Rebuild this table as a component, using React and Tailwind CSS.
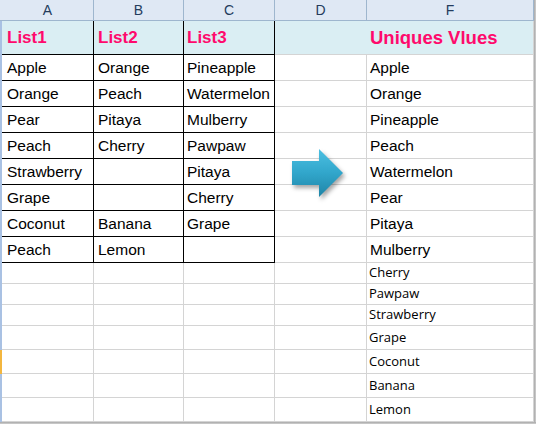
import React from "react";

const A = ["Apple", "Orange", "Pear", "Peach", "Strawberry", "Grape", "Coconut", "Peach"];
const B = ["Orange", "Peach", "Pitaya", "Cherry", "", "", "Banana", "Lemon"];
const C = ["Pineapple", "Watermelon", "Mulberry", "Pawpaw", "Pitaya", "Cherry", "Grape", ""];
const F = ["Apple", "Orange", "Pineapple", "Peach", "Watermelon", "Pear", "Pitaya", "Mulberry"];
const F2 = [
  ["Cherry", "h-[21px]"],
  ["Pawpaw", "h-[21px]"],
  ["Strawberry", "h-[21px]"],
  ["Grape", "h-[24px]"],
  ["Coconut", "h-[24px]"],
  ["Banana", "h-[24px]"],
  ["Lemon", "h-[24px]"],
];

const arial = { fontFamily: '"Liberation Sans", Arial, sans-serif' };
const calibri = { fontFamily: '"Open Sans", "Noto Sans", sans-serif' };

function Strip({ orange }) {
  return <div className={`w-[2px] shrink-0 ${orange ? "bg-[#f3b63f]" : "bg-[#a9c1e3]"}`} />;
}

function Arrow() {
  return (
    <svg
      className="absolute left-[290px] top-[147px] drop-shadow-[2px_3px_2px_rgba(0,0,0,0.35)]"
      width="58"
      height="54"
      viewBox="0 0 58 54"
    >
      <defs>
        <linearGradient id="ag" x1="0" y1="0" x2="0" y2="1">
          <stop offset="0" stopColor="#4cc0e2" />
          <stop offset="0.5" stopColor="#31a6cb" />
          <stop offset="1" stopColor="#1f84a6" />
        </linearGradient>
      </defs>
      <path d="M2 14 H29 V2 L53 26 L29 50 V38 H2 Z" fill="url(#ag)" />
    </svg>
  );
}

export default function App() {
  return (
    <div className="w-[536px] h-[424px] bg-white overflow-hidden flex flex-col" style={arial}>
      <div className="flex">
        <div className="relative w-[534px] flex flex-col">
          {/* column header row */}
          <div className="flex h-[21px] bg-[#dfe8f4] border-b border-[#9eb6ce] text-[14px] text-[#243c5c]">
            <div className="w-[2px] shrink-0 bg-[#dfe8f4]" />
            {[
              ["A", "w-[92px]"],
              ["B", "w-[90px]"],
              ["C", "w-[91px]"],
              ["D", "w-[92px]"],
              ["F", "w-[167px]"],
            ].map(([l, w]) => (
              <div key={l} className={`${w} shrink-0 border-r border-[#9eb6ce] flex items-center justify-center`}>
                {l}
              </div>
            ))}
          </div>
          {/* list header row */}
          <div className="flex h-[34px] font-bold text-[#ff0a6c]">
            <Strip />
            <div className="w-[92px] shrink-0 bg-[#daeef3] border-r border-b border-black flex items-center pl-[5px] text-[17px]">List1</div>
            <div className="w-[90px] shrink-0 bg-[#daeef3] border-r border-b border-black flex items-center pl-[4px] text-[17px]">List2</div>
            <div className="w-[91px] shrink-0 bg-[#daeef3] border-r border-b border-black flex items-center pl-[3px] text-[17px]">List3</div>
            <div className="w-[92px] shrink-0 bg-[#daeef3] border-b border-[#d4d4d4]" />
            <div className="w-[167px] shrink-0 bg-[#daeef3] border-r border-b border-[#d4d4d4] flex items-center pl-[3px] text-[18.5px]">Uniques Vlues</div>
          </div>
          {/* data rows */}
          {A.map((a, i) => (
            <div key={i} className="flex h-[26px] text-[15.5px] text-black">
              <Strip />
              <div className="w-[92px] shrink-0 border-r border-b border-black flex items-center pl-[5px] whitespace-nowrap">{a}</div>
              <div className="w-[90px] shrink-0 border-r border-b border-black flex items-center pl-[4px] whitespace-nowrap">{B[i]}</div>
              <div className="w-[91px] shrink-0 border-r border-b border-black flex items-center pl-[3px] whitespace-nowrap overflow-hidden">{C[i]}</div>
              <div className="w-[92px] shrink-0 border-r border-b border-[#d4d4d4]" />
              <div className="w-[167px] shrink-0 border-r border-b border-[#d4d4d4] flex items-center pl-[3px] whitespace-nowrap">{F[i]}</div>
            </div>
          ))}
          {F2.map(([t, h], i) => (
            <div key={t} className={`flex ${h} text-[13px] text-black`}>
              <Strip orange={i === 4} />
              <div className="w-[92px] shrink-0 border-r border-b border-[#d4d4d4]" />
              <div className="w-[90px] shrink-0 border-r border-b border-[#d4d4d4]" />
              <div className="w-[91px] shrink-0 border-r border-b border-[#d4d4d4]" />
              <div className="w-[92px] shrink-0 border-r border-b border-[#d4d4d4]" />
              <div className="w-[167px] shrink-0 border-r border-b border-[#d4d4d4] flex items-center pl-[2px] whitespace-nowrap" style={calibri}>
                {t}
              </div>
            </div>
          ))}
          <Arrow />
        </div>
        <div className="w-[2px] shrink-0 bg-gradient-to-r from-[#a8a8a8] to-[#d0d0d0]" />
      </div>
      <div className="h-[2px] w-full bg-gradient-to-b from-[#a8a8a8] to-[#d0d0d0]" />
    </div>
  );
}
